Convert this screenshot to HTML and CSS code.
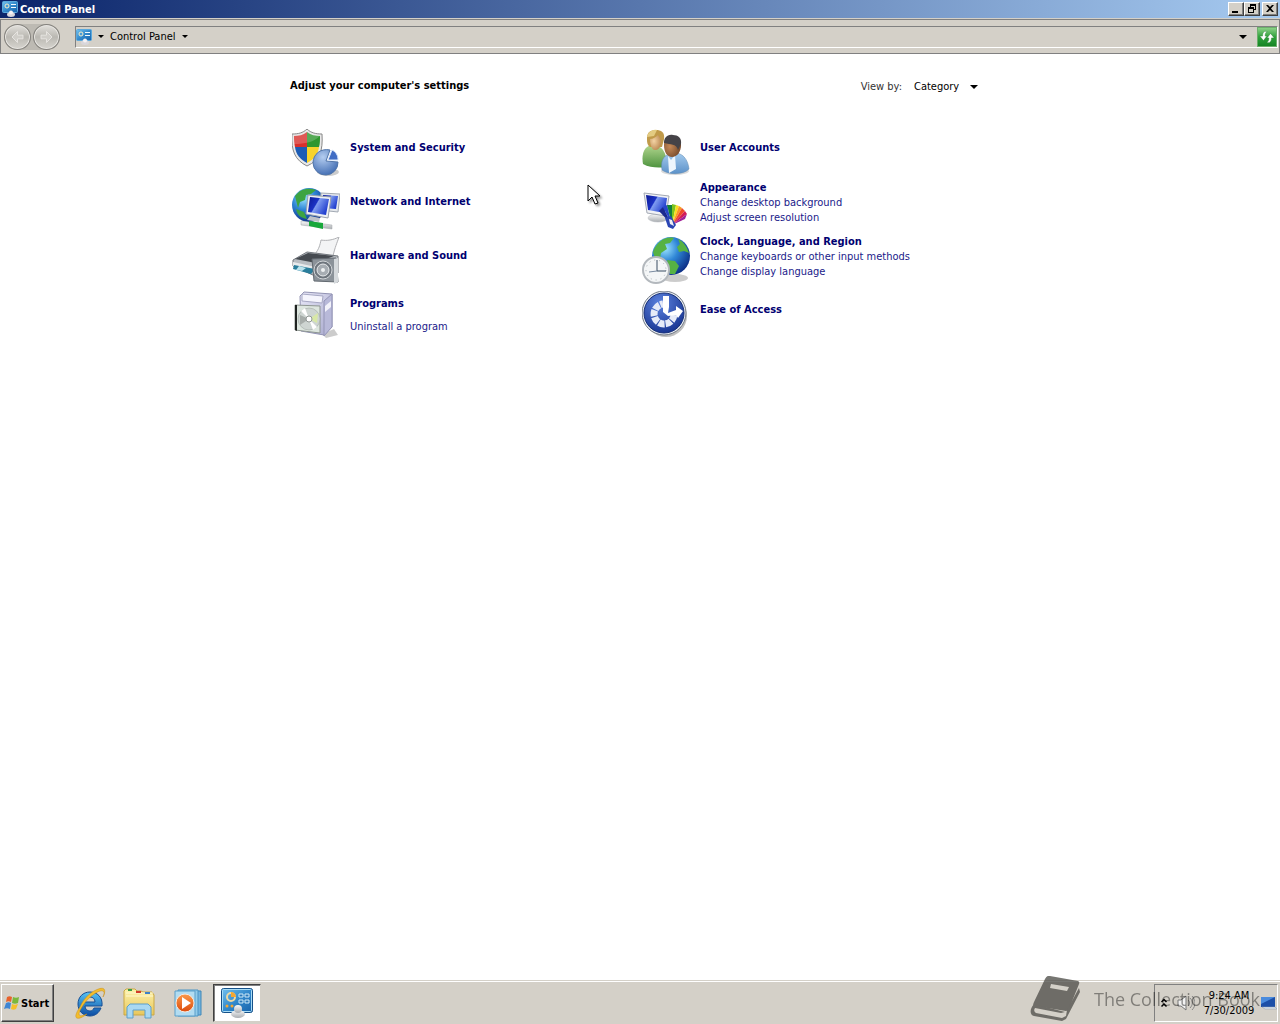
FILE: index.html
```html
<!DOCTYPE html>
<html lang="en">
<head>
    <meta charset="UTF-8">
    <meta name="viewport" content="width=device-width, initial-scale=1.0">
    <title>Control Panel</title>
    <link rel="stylesheet" href="styles.css">
</head>
<body>
    <!-- Shared drawings -->
    <svg class="defs" aria-hidden="true">
        <defs>
            <linearGradient id="panelBlue" x1="0" y1="0" x2="1" y2="1">
                <stop offset="0" stop-color="#75c3ef"/><stop offset="0.5" stop-color="#3289cc"/><stop offset="1" stop-color="#1762ab"/>
            </linearGradient>
            <radialGradient id="globe" cx="0.35" cy="0.3" r="0.75">
                <stop offset="0" stop-color="#9be4ff"/><stop offset="0.45" stop-color="#2f86d6"/><stop offset="1" stop-color="#0a2c83"/>
            </radialGradient>
            <linearGradient id="screen" x1="0" y1="0" x2="1" y2="0.5">
                <stop offset="0" stop-color="#0c1a96"/><stop offset="0.45" stop-color="#1b32c4"/><stop offset="0.5" stop-color="#7f9cf0"/><stop offset="1" stop-color="#2340cf"/>
            </linearGradient>
            <linearGradient id="silver" x1="0" y1="0" x2="0" y2="1">
                <stop offset="0" stop-color="#fafafa"/><stop offset="1" stop-color="#a9adb1"/>
            </linearGradient>
            <radialGradient id="pie" cx="0.4" cy="0.3" r="0.8">
                <stop offset="0" stop-color="#b4cdf0"/><stop offset="1" stop-color="#3865ae"/>
            </radialGradient>
            <radialGradient id="skinLight" cx="0.35" cy="0.4" r="0.7">
                <stop offset="0" stop-color="#f3d3a4"/><stop offset="1" stop-color="#b98650"/>
            </radialGradient>
            <radialGradient id="skinDark" cx="0.35" cy="0.5" r="0.7">
                <stop offset="0" stop-color="#c58a58"/><stop offset="1" stop-color="#6d4225"/>
            </radialGradient>
            <linearGradient id="green" x1="0" y1="0" x2="0" y2="1">
                <stop offset="0" stop-color="#b2d68e"/><stop offset="1" stop-color="#4f9440"/>
            </linearGradient>
            <linearGradient id="shirt" x1="0" y1="0" x2="0" y2="1">
                <stop offset="0" stop-color="#a4cbee"/><stop offset="1" stop-color="#5d92c9"/>
            </linearGradient>
            <radialGradient id="access" cx="0.4" cy="0.25" r="0.8">
                <stop offset="0" stop-color="#5c82de"/><stop offset="1" stop-color="#15328f"/>
            </radialGradient>
            <linearGradient id="box" x1="0" y1="0" x2="1" y2="1">
                <stop offset="0" stop-color="#e9e9f8"/><stop offset="1" stop-color="#a7a8cd"/>
            </linearGradient>
            <linearGradient id="orange" x1="0" y1="0" x2="0" y2="1">
                <stop offset="0" stop-color="#fb9a4b"/><stop offset="1" stop-color="#dc4b0d"/>
            </linearGradient>
            <linearGradient id="folder" x1="0" y1="0" x2="0" y2="1">
                <stop offset="0" stop-color="#fdf3ac"/><stop offset="1" stop-color="#e8c65c"/>
            </linearGradient>
            <linearGradient id="ie" x1="0" y1="0" x2="0" y2="1">
                <stop offset="0" stop-color="#57c4f5"/><stop offset="1" stop-color="#0b4ba2"/>
            </linearGradient>
            <symbol id="cpl" viewBox="0 0 32 30">
                <rect x="0.500" y="0.500" width="31" height="24" rx="2" fill="url(#panelBlue)" stroke="#155189"/>
                <rect x="1.500" y="1.500" width="29" height="22" rx="1" fill="none" stroke="#a9dcf6"/>
                <circle cx="10" cy="9" r="4" fill="none" stroke="#ecd9a5" stroke-width="2"/>
                <path d="M10 9V4a5 5 0 0 1 5 5z" fill="#f5a733"/>
                <path d="M18 6h4v3h-4zM24 6h4v3h-4zM18 12h4v3h-4zM24 12h4v3h-4z" fill="#2b78ba" stroke="#cdeaf8"/>
                <circle cx="6" cy="18" r="1.500" fill="#f5a733"/><circle cx="11" cy="18" r="1.500" fill="#f5a733"/>
                <ellipse cx="17" cy="26" rx="7" ry="4" fill="url(#silver)"/>
                <circle cx="17" cy="21" r="4" fill="url(#silver)"/>
            </symbol>
            <symbol id="cplSmall" viewBox="0 0 16 16">
                <rect x="0.500" y="0.500" width="15" height="11" rx="1" fill="url(#panelBlue)" stroke="#5aa8dc"/>
                <circle cx="5" cy="5" r="2" fill="#4a9bd6" stroke="#f6ecc4"/>
                <path d="M9 3.500h5M9 6.500h5" stroke="#f2fafe"/>
                <ellipse cx="9" cy="13.500" rx="4" ry="2.500" fill="#d9d7dc"/>
                <circle cx="9" cy="11.500" r="2" fill="#f5f2f4"/>
            </symbol>
            <symbol id="caret" viewBox="0 0 8 4"><path d="M0 0h8L4 4z" fill="#000"/></symbol>
        </defs>
    </svg>

    <div class="window">
        <header class="titlebar">
            <svg class="icon-small"><use href="#cplSmall"/></svg>
            <h1>Control Panel</h1>
            <div class="window-buttons">
                <button type="button" aria-label="Minimize"><svg viewBox="0 0 12 10"><path d="M2 7h6v2H2z"/></svg></button>
                <button type="button" aria-label="Restore"><svg viewBox="0 0 12 10"><path d="M4 0h6v6H8V5h1V2H5v1H4zM2 3h6v6H2zM3 5v3h4V5z" fill-rule="evenodd"/></svg></button>
                <button type="button" class="close" aria-label="Close"><svg viewBox="0 0 12 10"><path d="M2 1h2l2 2 2-2h2L7 4.500 10 8H8L6 6 4 8H2l3-3.500z"/></svg></button>
            </div>
        </header>

        <nav class="toolbar">
            <div class="travel">
                <button type="button" aria-label="Back"><svg viewBox="0 0 24 24"><path d="M12 6l-6 6 6 6v-4h6v-4h-6z"/></svg></button>
                <button type="button" aria-label="Forward"><svg viewBox="0 0 24 24"><path d="M12 6l6 6-6 6v-4H6v-4h6z"/></svg></button>
            </div>
            <div class="address">
                <svg class="icon-small"><use href="#cplSmall"/></svg>
                <button type="button" class="crumb-arrow" aria-label="Locations"><svg class="caret-small"><use href="#caret"/></svg></button>
                <a href="#" class="crumb">Control Panel</a>
                <button type="button" class="crumb-arrow" aria-label="Categories"><svg class="caret-small"><use href="#caret"/></svg></button>
                <button type="button" class="history" aria-label="Previous locations"><svg class="caret"><use href="#caret"/></svg></button>
                <button type="button" class="refresh" aria-label="Refresh"><svg viewBox="0 0 20 20"><path d="M10 4C7 3 5 5 5 9H2l4 5 4-5H8c0-2 0-3 2-5zM10 16c3 1 5-1 5-5h3l-4-5-4 5h2c0 2 0 3-2 5z" fill="#fff" stroke="#2c8235" stroke-width="0.500"/></svg></button>
            </div>
        </nav>

        <main class="content">
            <div class="content-head">
                <h2>Adjust your computer's settings</h2>
                <div class="view-by">
                    <label for="view">View by:</label>
                    <select id="view">
                        <option>Category</option>
                    </select>
                    <svg class="caret"><use href="#caret"/></svg>
                </div>
            </div>

            <div class="categories">
                <section class="category">
                    <svg viewBox="0 0 48 48">
                        <ellipse cx="36" cy="43" rx="11" ry="4" fill="#000" opacity="0.200"/>
                        <path d="M15 0c4 4 9 5 15 5 1 17-2 26-15 32C3 31-1 22 0 5 6 5 11 4 15 0z" fill="#e8e8e8" stroke="#888"/>
                        <path d="M15 3v15H3C2 14 2 10 2 7c5 0 9-1 13-4z" fill="#d8302c"/>
                        <path d="M15 3c4 3 8 4 13 4 0 4 0 8-1 11H15z" fill="#2f972f"/>
                        <path d="M3 18h12v16C8 30 4 26 3 18z" fill="#1c5cb4"/>
                        <path d="M15 18h12c-1 8-5 12-12 16z" fill="#f7d32b"/>
                        <path d="M2 7c5 0 9-1 13-4 4 3 8 4 13 4-6 6-15 8-26 8z" fill="#fff" opacity="0.200"/>
                        <path d="M21 34a12 12 0 1 0 25-1l-12-1 4-11c-9-2-17 4-17 13z" fill="url(#pie)" stroke="#5276aa"/>
                        <path d="M36 31l4-10c4 2 6 5 6 10z" fill="#3f6cc4" stroke="#d6e5fb"/>
                    </svg>
                    <div class="category-text"><a href="#" class="category-name">System and Security</a></div>
                </section>

                <section class="category">
                    <svg viewBox="0 0 48 48">
                        <ellipse cx="33" cy="42" rx="14" ry="4" fill="#000" opacity="0.150"/>
                        <path d="M1 35c-2-11 2-19 10-19s14 6 14 22c-8 1-17 1-24-3z" fill="url(#green)"/>
                        <path d="M5 9c0-6 4-8 9-8s9 2 8 9l-2 8H8c-3-2-3-5-3-9z" fill="#c09a4a"/>
                        <path d="M8 10c3 0 6-2 8-4 2 3 4 6 3 9-1 4-3 6-6 6s-5-5-5-11z" fill="url(#skinLight)"/>
                        <path d="M5 8c1-5 5-8 10-7l-3 6z" fill="#e3cb82"/>
                        <path d="M20 41c-2-11 3-16 11-17 9-1 15 6 16 16-5 6-21 6-27 1z" fill="url(#shirt)" stroke="#5b86b1" stroke-width="0.500"/>
                        <path d="M26 27l3 4 4-5 1 14-7 4z" fill="#eef6fd"/>
                        <path d="M22 16c0-6 3-9 8-9s9 4 9 9c0 7-4 12-9 12s-8-5-8-12z" fill="url(#skinDark)"/>
                        <path d="M22 14c0-5 3-9 9-8 5 0 9 3 8 9l-3 6c-2-7-7-5-14-7z" fill="#454347"/>
                    </svg>
                    <div class="category-text"><a href="#" class="category-name">User Accounts</a></div>
                </section>

                <section class="category">
                    <svg viewBox="0 0 48 48">
                        <circle cx="17" cy="22" r="17" fill="url(#globe)"/>
                        <path d="M3 13C8 6 16 4 24 7l-5 4-5 1-1 5-5 2-2 6zM4 26l8 3 3 7c-6-1-10-4-11-10z" fill="#3da442"/>
                        <path d="M29 10l19 1-2 18-18-2z" fill="#e5e8ec" stroke="#a2a9b3"/><path d="M31 12l15 1-2 13-14-1z" fill="url(#screen)"/>
                        <path d="M16 12l23 2-3 21-22-4z" fill="#edf0f4" stroke="#9aa1ad"/><path d="M18 14l19 2-3 16-18-3z" fill="url(#screen)"/>
                        <path d="M18 33l10 2-1 4-12-2z" fill="#bfc3c9"/>
                        <path d="M9 38l31 4v4l-31-4z" fill="url(#silver)" stroke="#a5a9ad" stroke-width="0.500"/>
                        <path d="M17 38l14 2v6l-14-3z" fill="#18a83b"/>
                    </svg>
                    <div class="category-text"><a href="#" class="category-name">Network and Internet</a></div>
                </section>

                <section class="category">
                    <svg viewBox="0 0 48 48">
                        <ellipse cx="16" cy="35" rx="10" ry="4" fill="url(#silver)" stroke="#b4b8be" stroke-width="0.500"/>
                        <path d="M2 10l25 3-3 20-19-3z" fill="#f1f2f5" stroke="#a3a9b4"/>
                        <path d="M4 12l21 3-2 15-17-3z" fill="url(#screen)"/>
                        <path d="M30 42L17 28l4-4z" fill="#1b2a8f"/><path d="M30 42l-9-18 4-2z" fill="#2746c8"/>
                        <path d="M30 42l-5-20h5z" fill="#12803c"/><path d="M30 42V21l4 1z" fill="#7cc41f"/>
                        <path d="M30 42l4-20 3 1z" fill="#f9df1d"/><path d="M30 42l7-19 3 2z" fill="#f79a24"/>
                        <path d="M30 42l10-17 3 3z" fill="#ee4a2a"/><path d="M30 42l13-14 2 3z" fill="#d41a55"/>
                        <path d="M30 42l15-11-2 5z" fill="#a01d96"/>
                        <path d="M23 35l6-2 5 9-3 4-5-2z" fill="#2b46b4"/>
                        <path d="M27 36l3 1 2 6-4-2z" fill="#f0f1f4"/>
                    </svg>
                    <div class="category-text">
                        <a href="#" class="category-name">Appearance</a>
                        <a href="#">Change desktop background</a>
                        <a href="#">Adjust screen resolution</a>
                    </div>
                </section>

                <section class="category">
                    <svg viewBox="0 0 48 48">
                        <path d="M29 3c6 1 12 0 18-3-2 6-4 10-6 19l-18-2c4-5 5-9 6-14z" fill="#f3f4f5" stroke="#b0b1b4"/>
                        <path d="M1 23l14-8 31 4v17l-23 3-22-10z" fill="#b9bdc2" stroke="#72777d"/>
                        <path d="M3 22l13-6 26 3-18 7z" fill="#454a50"/>
                        <path d="M1 25l23 5v4L1 29z" fill="#e7e9eb"/>
                        <path d="M2 28l21 4-4 5L1 32z" fill="#2a7e9c"/><path d="M7 29l7 2-4 3-6-1z" fill="#bce3ed"/>
                        <path d="M20 22l24-1 2 24-24-1z" fill="#8b9299" stroke="#636a71"/>
                        <path d="M42 22l4-1v24l-4 2z" fill="#d5d9dc"/>
                        <circle cx="31" cy="33" r="9" fill="#6e757d" stroke="#d1d5d8"/>
                        <circle cx="31" cy="33" r="6" fill="#a7adb3" stroke="#e8ebed"/>
                        <circle cx="31" cy="33" r="2" fill="#eef0f2"/>
                    </svg>
                    <div class="category-text"><a href="#" class="category-name">Hardware and Sound</a></div>
                </section>

                <section class="category">
                    <svg viewBox="0 0 48 48">
                        <ellipse cx="33" cy="41" rx="13" ry="4" fill="#000" opacity="0.200"/>
                        <circle cx="29" cy="19" r="19" fill="url(#globe)"/>
                        <path d="M11 15C15 4 24-1 32 1l-4 5-5 1 2 5-6 4-1 6-5-1zM36 2c6 3 9 8 11 14l-5-2-5 1-2-5 3-3zM25 23l8 1 4 5-4 8h-5z" fill="#56b243"/>
                        <circle cx="14" cy="33" r="13" fill="#f4f6f7" stroke="#b3b8bd" stroke-width="2"/>
                        <circle cx="14" cy="33" r="10" fill="none" stroke="#a9afb4" stroke-dasharray="1 4"/>
                        <path d="M15 23v11h9" fill="none" stroke="#384d63"/><path d="M15 34l-8 1" stroke="#7a8ba0"/>
                    </svg>
                    <div class="category-text">
                        <a href="#" class="category-name">Clock, Language, and Region</a>
                        <a href="#">Change keyboards or other input methods</a>
                        <a href="#">Change display language</a>
                    </div>
                </section>

                <section class="category spaced">
                    <svg viewBox="0 0 48 48">
                        <path d="M30 43l12-5 4 6-12 3z" fill="#000" opacity="0.200"/>
                        <path d="M8 5l4-4 28 2v33l-8 8-23-4z" fill="url(#box)" stroke="#9293b3"/>
                        <path d="M10 3l21 2-1 7-20-2z" fill="#f5f5fd" stroke="#a7a8c4"/>
                        <path d="M32 10l8-7v33l-8 9z" fill="#b8b9d9" stroke="#9495b7"/>
                        <path d="M33 15l6-5v6l-6 5z" fill="#f2f2fa"/>
                        <path d="M3 14l25 1v27l-25-3z" fill="#dde6df" stroke="#8e9691"/>
                        <path d="M3 14h2v26l-2-1z" fill="#202322"/>
                        <circle cx="17" cy="28" r="11" fill="#ced5d2" stroke="#99a09d" stroke-width="0.500"/>
                        <path d="M17 28L9 20l4-3zM17 28l8 8-4 3z" fill="#fff"/><path d="M17 28l9-6-1 10z" fill="#d8e8a7"/><path d="M17 28l-9 6V24z" fill="#a7adaa"/>
                        <circle cx="17" cy="28" r="3" fill="#fff" stroke="#919795"/>
                    </svg>
                    <div class="category-text">
                        <a href="#" class="category-name">Programs</a>
                        <a href="#">Uninstall a program</a>
                    </div>
                </section>

                <section class="category">
                    <svg viewBox="0 0 48 48">
                        <circle cx="24" cy="25" r="21" fill="#000" opacity="0.250"/>
                        <circle cx="22" cy="22" r="22" fill="#e6eaf0" stroke="#727a86"/>
                        <circle cx="22" cy="22" r="20" fill="url(#access)" stroke="#183179"/>
                        <path d="M32 24A10 10 0 1 1 21 13" fill="none" stroke="#e6ebf8" stroke-width="7" stroke-dasharray="6 1"/>
                        <path d="M21 5h6v11l-1 6 8-3v-4l7 5-5 7-2-3-8 1-5-4z" fill="#fff"/>
                    </svg>
                    <div class="category-text"><a href="#" class="category-name">Ease of Access</a></div>
                </section>
            </div>
        </main>
    </div>

    <footer class="taskbar">
        <button type="button" class="start">
            <svg viewBox="0 0 16 16">
                <path d="M3 2c2-1 3-1 5 0L7 7C5 6 4 6 2 7z" fill="#e8622c"/><path d="M9 2c2 1 4 1 6 0l-1 6c-2 1-4 1-6 0z" fill="#7ab83c"/>
                <path d="M2 8c2-1 3-1 5 0l-1 6c-2-1-4-1-6 0z" fill="#3f86d4"/><path d="M8 9c2 1 3 1 6 0l-2 5c-2 1-3 1-5 0z" fill="#f5c02b"/>
            </svg>
            Start
        </button>
        <div class="tasks">
            <button type="button" aria-label="Internet Explorer">
                <svg viewBox="0 0 32 32">
                    <path d="M16 5C9 5 4 10 4 17s5 12 12 12c5 0 9-3 11-8h-7c-1 2-2 3-4 3-3 0-5-2-5-5h17c1-9-5-14-12-14zm-5 10c0-3 2-5 5-5s5 2 5 5z" fill="url(#ie)" stroke="#154e96"/>
                    <path d="M6 20C-3 33 4 34 13 27 4 31 3 28 8 20 13 11 25 2 29 4c2 1 1 4 0 6 4-8 1-11-7-7C15 6 9 13 6 20z" fill="#f3bd2e" stroke="#c98d13" stroke-width="0.500"/>
                </svg>
            </button>
            <button type="button" aria-label="Windows Explorer">
                <svg viewBox="0 0 32 32">
                    <path d="M1 4l2-2h9l2 2h4l2 1h9l2 3v20H1z" fill="url(#folder)" stroke="#cba843"/>
                    <path d="M3 6h27M3 9h27" stroke="#fff8cf"/><path d="M5 3h4" stroke="#3d9b45" stroke-width="2"/><path d="M13 5h5" stroke="#d23b2b" stroke-width="2"/><path d="M22 6h5" stroke="#3d82c8" stroke-width="2"/>
                    <path d="M4 31V20l3-3h18l3 3v11h-6v-8H10v8z" fill="#a9d8f2" stroke="#5c9fcc"/>
                </svg>
            </button>
            <button type="button" aria-label="Windows Media Player">
                <svg viewBox="0 0 32 32">
                    <path d="M10 4h19v24H10z" fill="#77b5dd" stroke="#3e87b8"/><path d="M6 3h20v26H6z" fill="#93cbe9" stroke="#4b94c5"/><path d="M3 4h20v25H3z" fill="#b2dcf1" stroke="#5a9fca"/>
                    <circle cx="13" cy="16" r="9" fill="url(#orange)" stroke="#f7eadf"/><path d="M10 10l9 6-9 6z" fill="#fff"/>
                </svg>
            </button>
            <button type="button" class="active" aria-label="Control Panel"><svg><use href="#cpl"/></svg></button>
        </div>
        <div class="tray">
            <button type="button" class="tray-more" aria-label="Show hidden icons"><svg viewBox="0 0 8 10"><path d="M1.500 4L4 1.500 6.500 4M1.500 8.500L4 6l2.500 2.500" fill="none" stroke="#000" stroke-width="1.500"/></svg></button>
            <svg class="speaker" viewBox="0 0 18 16"><path d="M1 5h3l5-4v14l-5-4H1z" fill="#f2f2f2" stroke="#777"/><path d="M11 5c2 2 2 4 0 6M13 3c3 3 3 7 0 10M15 1c4 4 4 10 0 14" fill="none" stroke="#888"/></svg>
            <div class="clock"><time>9:24 AM</time><time>7/30/2009</time></div>
            <svg class="show-desktop" viewBox="0 0 16 14"><path d="M0 1h14v10H0z" fill="#1c4fa8"/><path d="M0 1h14L0 8z" fill="#4a8bdd"/><path d="M1 11h13l2 2H4z" fill="#dce5ee" stroke="#8c99a8" stroke-width="0.500"/></svg>
        </div>
    </footer>

    <div class="watermark">
        <svg viewBox="0 0 50 46">
            <path d="M20 0l28 5q2 1 1 3L39 33q-1 2-3 2L5 30Q2 30 4 26L15 3q2-4 5-3zM21 8l-1 4 17 3 2-4z" fill="#55544f" fill-rule="evenodd"/>
            <path d="M4 28C-1 34 0 39 4 40l28 5 4-2 14-27-1-4-12 22-1 6-4 2-26-5q-3-2-1-5l26 5 4-1z" fill="#55544f"/>
        </svg>
        <span>The Collection Book</span>
    </div>

    <svg class="cursor" viewBox="0 0 13 22" aria-hidden="true"><path d="M1 1v16l4-4 3 7 3-1-3-7h5z" fill="#fff" stroke="#000"/></svg>
</body>
</html>
```
FILE: styles.css
```css
* {
    box-sizing: border-box;
}

body {
    display: flex;
    flex-direction: column;
    min-height: 100vh;
    margin: 0;
    background: #fff;
    color: #000;
    font-family: Tahoma, 'DejaVu Sans Condensed', 'DejaVu Sans', sans-serif;
    font-size: 11px;
    line-height: 15px;
}

button, select {
    margin: 0;
    padding: 0;
    border: none;
    background: none;
    color: inherit;
    font: inherit;
}

h1, h2 {
    margin: 0;
    font-size: 11px;
}

svg {
    display: block;
    flex-shrink: 0;
}

.defs {
    position: absolute;
    width: 0;
    height: 0;
}

.icon-small {
    width: 16px;
    height: 16px;
}

.caret {
    width: 8px;
    height: 4px;
}

.caret-small {
    width: 6px;
    height: 3px;
}

.window {
    flex: 1;
}

/* Title bar */
.titlebar {
    display: flex;
    align-items: center;
    height: 18px;
    padding: 0 2px;
    background: linear-gradient(to right, #0a246a, #a6caf0);
    color: #fff;
}

.titlebar h1 {
    flex: 1;
    padding-left: 2px;
}

.window-buttons {
    display: flex;
}

.window-buttons button {
    width: 16px;
    height: 14px;
    padding: 1px;
    background: #d4d0c8;
    border: 1px solid;
    border-color: #fff #404040 #404040 #fff;
    box-shadow: inset -1px -1px #808080;
}

.window-buttons .close {
    margin-left: 2px;
}

.window-buttons svg {
    width: 12px;
    height: 10px;
}

/* Toolbar */
.toolbar {
    display: flex;
    align-items: center;
    gap: 15px;
    height: 36px;
    padding: 3px 2px 1px 4px;
    background: #d4d0c8;
    border-bottom: 1px solid #808080;
    box-shadow: inset 0 1px #d4d0c8, inset 1px 2px #808080, inset -1px 0 #808080;
}

.travel {
    display: flex;
    gap: 2px;
    border-radius: 13px;
    background: #bdbab3;
}

.travel button {
    width: 27px;
    height: 26px;
    padding: 1px;
    border: 1px solid #85837e;
    border-radius: 50%;
    background: linear-gradient(#e2e0dc, #bab8b2 50%, #d7d5d0);
    box-shadow: inset 0 0 0 1px #e8e6e2;
}

.travel svg {
    width: 23px;
    height: 22px;
    fill: #d0cec9;
    stroke: #e8e6e3;
}

.address {
    display: flex;
    flex: 1;
    align-items: center;
    height: 22px;
    border: 1px solid;
    border-color: #808080 #fff #fff #808080;
}

.crumb-arrow {
    display: flex;
    align-items: center;
    justify-content: center;
    width: 18px;
    height: 20px;
}

.crumb {
    color: #000;
    text-decoration: none;
}

.history {
    margin-left: auto;
    padding: 8px 10px;
}

.refresh {
    width: 20px;
    height: 20px;
    border: 1px solid #6cae6b;
    background: linear-gradient(#8cd087, #2ea23b 50%, #178525);
}

.refresh svg {
    width: 18px;
    height: 18px;
}

/* Categories */
.content {
    max-width: 700px;
    margin: 0 auto;
    padding-top: 24px;
}

.content-head {
    display: flex;
    justify-content: space-between;
    padding-right: 12px;
    margin-bottom: 32px;
}

.view-by {
    display: flex;
    align-items: center;
    gap: 12px;
    padding-top: 1px;
}

.view-by select {
    appearance: none;
    width: 60px;
    margin-right: -16px;
}

.view-by label {
    color: #333;
}

.view-by .caret {
    pointer-events: none;
}

.categories {
    display: grid;
    grid-template-columns: 1fr 1fr;
    grid-auto-rows: 54px;
}

.category {
    display: flex;
    gap: 10px;
    padding-left: 2px;
}

.category > svg {
    width: 48px;
    height: 48px;
    margin-top: 3px;
}

.category-text {
    display: flex;
    flex-direction: column;
    align-items: flex-start;
}

.category-text a {
    color: #1a1a8a;
    text-decoration: none;
}

.category-text a:hover {
    text-decoration: underline;
}

.category-text .category-name {
    color: #000070;
    font-weight: bold;
}

.category-name:only-child {
    margin-top: 14px;
}

.spaced .category-text {
    gap: 8px;
    padding-top: 8px;
}

/* Taskbar */
.taskbar {
    display: flex;
    align-items: center;
    height: 44px;
    padding: 1px 2px 0 1px;
    background: #d4d0c8;
    border-top: 1px solid #d4d0c8;
    box-shadow: inset 0 1px #fff;
}

.start {
    display: flex;
    align-items: center;
    gap: 1px;
    width: 53px;
    height: 38px;
    padding-left: 2px;
    border: 1px solid;
    border-color: #fff #404040 #404040 #fff;
    box-shadow: inset -1px -1px #808080;
    font-weight: bold;
}

.start svg {
    width: 16px;
    height: 16px;
}

.tasks {
    display: flex;
    gap: 1px;
    padding-left: 12px;
}

.tasks button {
    display: flex;
    align-items: center;
    justify-content: center;
    width: 48px;
    height: 38px;
}

.tasks .active {
    background: #fff;
    border: 1px solid;
    border-color: #404040 #d4d0c8 #d4d0c8 #404040;
    box-shadow: inset 1px 1px #808080;
}

.tasks svg {
    width: 32px;
    height: 32px;
}

.tray {
    display: flex;
    align-items: center;
    width: 124px;
    height: 38px;
    margin-left: auto;
    padding-left: 5px;
    border: 1px solid;
    border-color: #808080 #fff #fff #808080;
}

.tray-more svg {
    width: 8px;
    height: 10px;
}

.speaker {
    width: 18px;
    height: 16px;
    margin-left: 9px;
}

.clock {
    display: flex;
    flex: 1;
    flex-direction: column;
    align-items: center;
    padding-left: 2px;
}

.show-desktop {
    width: 16px;
    height: 14px;
}

.watermark {
    position: absolute;
    right: 20px;
    bottom: 2px;
    display: flex;
    align-items: center;
    gap: 14px;
    color: #000;
    font: 18px/24px 'Open Sans', 'Noto Sans', sans-serif;
    opacity: 0.8;
    pointer-events: none;
}

.watermark svg {
    width: 50px;
    height: 46px;
}

.watermark span {
    opacity: 0.5;
}

.cursor {
    position: absolute;
    left: 587px;
    top: 184px;
    width: 13px;
    height: 22px;
    filter: drop-shadow(2px 2px 1px #0006);
    pointer-events: none;
}
```
